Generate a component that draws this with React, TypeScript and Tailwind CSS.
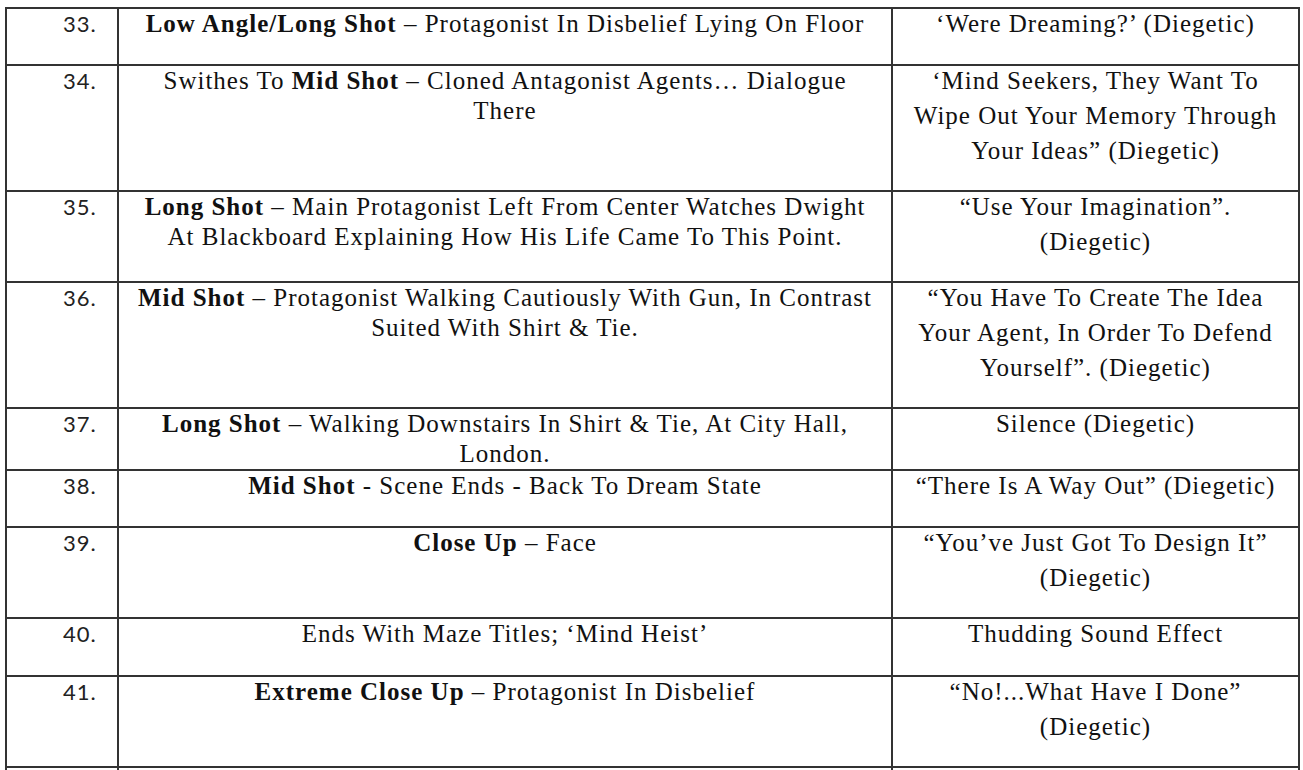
import React from "react";

type Row = {
  num: string;
  h: string;
  shot: React.ReactNode[];
  sound: string[];
};

const rows: Row[] = [
  {
    num: "33.",
    h: "h-[57px]",
    shot: [
      <>
        <b>Low Angle/Long Shot</b> – Protagonist In Disbelief Lying On Floor
      </>,
    ],
    sound: ["‘Were Dreaming?’ (Diegetic)"],
  },
  {
    num: "34.",
    h: "h-[126px]",
    shot: [
      <>
        Swithes To <b>Mid Shot</b> – Cloned Antagonist Agents… Dialogue
      </>,
      "There",
    ],
    sound: [
      "‘Mind Seekers, They Want To",
      "Wipe Out Your Memory Through",
      "Your Ideas” (Diegetic)",
    ],
  },
  {
    num: "35.",
    h: "h-[91px]",
    shot: [
      <>
        <b>Long Shot</b> – Main Protagonist Left From Center Watches Dwight
      </>,
      "At Blackboard Explaining How His Life Came To This Point.",
    ],
    sound: ["“Use Your Imagination”.", "(Diegetic)"],
  },
  {
    num: "36.",
    h: "h-[126px]",
    shot: [
      <>
        <b>Mid Shot</b> – Protagonist Walking Cautiously With Gun, In Contrast
      </>,
      "Suited With Shirt & Tie.",
    ],
    sound: [
      "“You Have To Create The Idea",
      "Your Agent, In Order To Defend",
      "Yourself”. (Diegetic)",
    ],
  },
  {
    num: "37.",
    h: "h-[62px]",
    shot: [
      <>
        <b>Long Shot</b> – Walking Downstairs In Shirt & Tie, At City Hall,
      </>,
      "London.",
    ],
    sound: ["Silence (Diegetic)"],
  },
  {
    num: "38.",
    h: "h-[57px]",
    shot: [
      <>
        <b>Mid Shot</b> - Scene Ends - Back To Dream State
      </>,
    ],
    sound: ["“There Is A Way Out” (Diegetic)"],
  },
  {
    num: "39.",
    h: "h-[91px]",
    shot: [
      <>
        <b>Close Up</b> – Face
      </>,
    ],
    sound: ["“You’ve Just Got To Design It”", "(Diegetic)"],
  },
  {
    num: "40.",
    h: "h-[58px]",
    shot: ["Ends With Maze Titles; ‘Mind Heist’"],
    sound: ["Thudding Sound Effect"],
  },
  {
    num: "41.",
    h: "h-[91px]",
    shot: [
      <>
        <b>Extreme Close Up</b> – Protagonist In Disbelief
      </>,
    ],
    sound: ["“No!...What Have I Done”", "(Diegetic)"],
  },
];

const serif = "font-['Liberation_Serif',serif] text-[25px] tracking-[1px] text-[#111]";

export default function App() {
  return (
    <div className="min-h-[770px] bg-white pl-[5px] pt-[7px]">
      <div className="grid w-[1295px] grid-cols-[112px_774px_407px] border-l-2 border-t-2 border-[#333]">
        {rows.map((r) => (
          <React.Fragment key={r.num}>
            <div className={`${r.h} border-b-2 border-r-2 border-[#333] pl-[56px] font-['Lato',sans-serif] text-[22px] leading-[30px] tracking-[1px] text-[#222]`}>
              {r.num}
            </div>
            <div className={`${r.h} border-b-2 border-r-2 border-[#333] text-center leading-[30px] whitespace-nowrap ${serif}`}>
              {r.shot.map((line, i) => (
                <div key={i}>{line}</div>
              ))}
            </div>
            <div className={`${r.h} border-b-2 border-r-2 border-[#333] text-center leading-[35px] whitespace-nowrap ${serif}`}>
              <div className="-mt-[3px]">
                {r.sound.map((line, i) => (
                  <div key={i}>{line}</div>
                ))}
              </div>
            </div>
          </React.Fragment>
        ))}
        <div className="h-[30px] border-r-2 border-[#333]" />
        <div className="h-[30px] border-r-2 border-[#333]" />
        <div className="h-[30px] border-r-2 border-[#333]" />
      </div>
    </div>
  );
}
